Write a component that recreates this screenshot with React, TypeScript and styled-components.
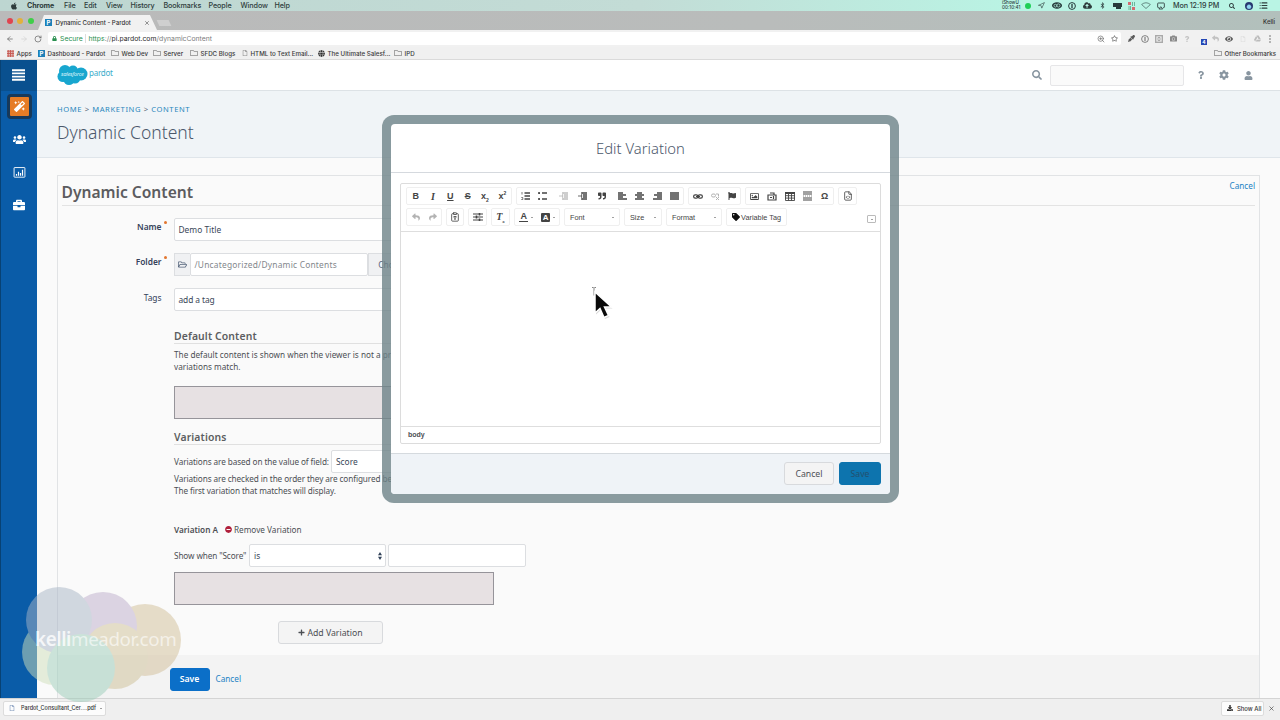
import React from 'react';
import styled, { createGlobalStyle } from 'styled-components';
import {
  FaMagic, FaUsers, FaBriefcase, FaRegFolderOpen, FaQuestion, FaCog, FaUser, FaSearch,
  FaApple, FaLock, FaPlus, FaMinusCircle, FaBluetoothB, FaCamera, FaEye, FaEyeDropper, FaCloudUploadAlt,
  FaRegFolder, FaQuoteRight,
  FaFlag, FaReply, FaShare, FaTag, FaRegImage,
  FaGlobe, FaRegFile, FaGoogleDrive, FaRegStar, FaDownload,
} from 'react-icons/fa';
import { Navigation, Airplay, List, ZoomIn, RotateCw, ArrowLeft, ArrowRight, X, ClipboardType, FileCode } from 'lucide-react';

const sans = '"Noto Sans", "Open Sans", sans-serif';
const ui = 'Inter, "Liberation Sans", sans-serif';

const Global = createGlobalStyle`
  * { box-sizing: border-box; }
  body { margin: 0; font-family: ${sans}; color: #4c4f54; overflow: hidden; }
  svg { display: block; flex: none; }
`;

const Screen = styled.div`
  position: relative;
  display: flex;
  flex-direction: column;
  width: 1280px;
  height: 720px;
  overflow: hidden;
  background: #fafafa;
`;

/* ---------- desktop menu bar and browser chrome ---------- */
const MenuBar = styled.div`
  display: flex;
  align-items: center;
  height: 11px;
  padding-left: 10px;
  background: linear-gradient(90deg, #bdd6d1, #c3dcd6 50%, #b9f4e4 80%);
  font: 500 7.2px/11px ${ui};
  color: #2e3c3c;
`;
const MenuItem = styled.span<{ $w: number; $bold?: boolean }>`
  width: ${p => p.$w}px;
  font-weight: ${p => (p.$bold ? 700 : 500)};
  letter-spacing: -0.1px;
  white-space: nowrap;
`;
const Spacer = styled.div`flex: 1;`;
const Slot = styled.span<{ $w: number; $c?: string }>`
  display: flex;
  align-items: center;
  justify-content: center;
  width: ${p => p.$w}px;
  color: ${p => p.$c || 'inherit'};
  flex: none;
`;
const Recorder = styled.span`
  width: 22px;
  font-size: 4.6px;
  line-height: 4.4px;
  white-space: pre;
`;
const Dot = styled.i<{ $c: string; $s?: number }>`
  width: ${p => p.$s || 6}px;
  height: ${p => p.$s || 6}px;
  border-radius: 50%;
  background: ${p => p.$c};
`;
const TabStrip = styled.div`
  display: flex;
  align-items: flex-end;
  height: 19px;
  padding: 0 5px 0 7px;
  background: linear-gradient(90deg, #bababa, #b9bcbb 60%, #b2c0bc);
  font: 500 6.1px ${ui};
  color: #333;
`;
const Lights = styled.div`
  display: flex;
  gap: 4.3px;
  width: 31px;
  padding-bottom: 6px;
`;
const Tab = styled.div`
  display: flex;
  align-items: center;
  width: 119px;
  height: 15px;
  padding: 0 7px 0 2px;
  background: #f1f1f1;
  clip-path: polygon(0 100%, 6px 0, 112px 0, 119px 100%);
  white-space: nowrap;
`;
const TabTitle = styled.span`flex: 1; padding-left: 3.5px;`;
const NewTab = styled.div`
  width: 12px;
  height: 6px;
  margin: 0 0 4px 1px;
  background: #cfcfcf;
  transform: skewX(25deg);
`;
const UserName = styled.span`padding-bottom: 5px; font-size: 6px;`;
const PLogo = styled.span`
  display: grid;
  place-items: center;
  width: 7px;
  height: 7px;
  margin-left: 5px;
  background: #1d80b8;
  color: #fff;
  font: 700 6px/7px ${ui};
`;
const AddressBar = styled.div`
  display: flex;
  align-items: center;
  height: 17px;
  background: #f1f1f1;
  color: #5c5c5c;
`;
const Omnibox = styled.div`
  display: flex;
  align-items: center;
  width: 1073px;
  height: 13px;
  padding: 0 3px 0 4px;
  background: #fff;
  border-radius: 2px;
  font: 400 6.85px ${ui};
  color: #7c7c7c;
`;
const Secure = styled.span`
  width: 26px;
  margin: 0 2.5px 0 3px;
  color: #2a9050;
  border-right: 1px solid #ddd;
`;
const Host = styled.span`color: #2b2b2b;`;
const Scheme = styled.span`color: #2a9050;`;
const Badge = styled.span`
  position: relative;
  &::after {
    content: '4';
    position: absolute;
    left: 0;
    top: 0;
    width: 6px;
    background: #2447b5;
    color: #fff;
    font: 700 5px/6px ${ui};
    text-align: center;
  }
`;
const Bookmarks = styled.div`
  display: flex;
  align-items: center;
  height: 13px;
  padding: 0 4px 0 7px;
  background: #f0f0f0;
  border-bottom: 1px solid #dadada;
  font: 500 6.2px ${ui};
  color: #3a3a3a;
`;
const Bookmark = styled.span<{ $w?: number }>`
  display: flex;
  align-items: center;
  gap: 2.5px;
  width: ${p => (p.$w ? p.$w + 'px' : 'auto')};
  white-space: nowrap;
  svg { color: #8b8b8b; }
  ${PLogo} { margin: 0; }
`;
const AppsGrid = styled.span`
  width: 7px;
  height: 7px;
  background:
    radial-gradient(circle, #c7574f 1px, transparent 1.2px) 0 0 / 2.4px 2.4px;
`;

/* ---------- application ---------- */
const Body = styled.div`display: flex; height: 638px;`;
const Sidebar = styled.nav`
  display: flex;
  flex-direction: column;
  align-items: center;
  width: 37px;
  padding-right: 1px;
  background: #0a5ca8;
  color: #fff;
  border-left: 1px solid #084274;
`;
const MenuToggle = styled.div`
  display: grid;
  place-items: center;
  width: 36px;
  height: 31px;
  padding: 0 0 2px;
  background: #09508f;
`;
const NavItem = styled.div<{ $active?: boolean }>`
  display: grid;
  place-items: center;
  width: 25px;
  height: 25px;
  margin: 2.5px 0 5.5px 1px;
  border-radius: 4px;
  border: 3px solid ${p => (p.$active ? '#17395a' : 'transparent')};
  background: ${p => (p.$active ? '#e67c26' : 'transparent')};
`;
const Main = styled.main`flex: 1; display: flex; flex-direction: column;`;
const Header = styled.header`
  display: flex;
  align-items: center;
  height: 31px;
  padding: 0 13px 0 20px;
  background: #fff;
  border-bottom: 1px solid #dde2e6;
  color: #8895a0;
`;
const Wordmark = styled.span`
  margin: -4px 0 0 1px;
  font-size: 8px;
  line-height: 10px;
  letter-spacing: -0.25px;
  color: #3aaccb;
`;
const SearchBox = styled.div`
  width: 134px;
  height: 21px;
  margin-left: 7px;
  background: #fafafa;
  border: 1px solid #e6e6e8;
  border-radius: 2px;
`;
const PageHead = styled.div`
  height: 67px;
  padding: 12px 20px 0;
  background: #f0f4f7;
  border-bottom: 1px solid #dfe5ea;
`;
const Crumbs = styled.div`
  height: 13px;
  font-size: 7.6px;
  line-height: 13px;
  letter-spacing: 0.6px;
  color: #2a87bd;
`;
const Sep = styled.span`color: #5a6a78;`;
const PageTitle = styled.h1`
  margin: 4px 0 0;
  font-size: 17.5px;
  line-height: 25px;
  font-weight: 300;
  color: #4b586b;
`;
const Panel = styled.section`
  width: 1203px;
  height: 523px;
  margin: 17px 0 0 20px;
  border: 1px solid #e1e3e5;
  border-bottom: 0;
`;
const PanelHead = styled.div`
  display: flex;
  justify-content: space-between;
  height: 30px;
  margin: 0 4px;
  border-bottom: 1px solid #e3e3e3;
`;
const PanelTitle = styled.h2`
  margin: 0 0 0 -0.5px;
  font-size: 15.6px;
  line-height: 32px;
  font-weight: 600;
  color: #5c5c5f;
`;
const LinkText = styled.span<{ $lh: number }>`
  font-size: 8.2px;
  line-height: ${p => p.$lh}px;
  color: #1c82c4;
`;
const Field = styled.div`display: flex; height: 23px; margin-top: 12px;`;
const Label = styled.label<{ $bold?: boolean }>`
  position: relative;
  width: 103.5px;
  margin-right: 12px;
  text-align: right;
  font-size: 8.4px;
  line-height: ${p => (p.$bold ? 18 : 20)}px;
  font-weight: ${p => (p.$bold ? 600 : 400)};
  color: #35425a;
`;
const Required = styled.i`
  position: absolute;
  right: -5px;
  top: 3px;
  width: 3px;
  height: 3px;
  border-radius: 50%;
  background: #e2762f;
`;
const Input = styled.div<{ $w: number; $ls?: number; $muted?: boolean }>`
  display: flex;
  align-items: center;
  justify-content: space-between;
  width: ${p => p.$w}px;
  height: 23px;
  padding: 0 3px 0 4px;
  background: #fff;
  border: 1px solid #dcdee1;
  border-radius: 2px;
  font-size: 8.4px;
  letter-spacing: ${p => p.$ls || 0}px;
  color: ${p => (p.$muted ? '#83878c' : '#3a4658')};
`;
const Addon = styled.div<{ $w: number }>`
  display: flex;
  align-items: center;
  justify-content: center;
  width: ${p => p.$w}px;
  height: 23px;
  background: #f0f1f3;
  border: 1px solid #dcdee1;
  border-width: 1px 0 1px 1px;
  font-size: 8.4px;
  color: #55657c;
`;
const Content = styled.div`margin-left: 116px;`;
const Subhead = styled.h3<{ $mt: number }>`
  width: 320px;
  height: 15px;
  margin: ${p => p.$mt}px 0 0;
  border-bottom: 1px solid #e0e0e0;
  font-size: 10.4px;
  line-height: 14px;
  letter-spacing: 0.12px;
  font-weight: 600;
  color: #5c5e61;
`;
const Para = styled.p<{ $mt?: number; $ls?: number }>`
  margin: ${p => p.$mt || 0}px 0 0;
  font-size: 8.2px;
  line-height: 12px;
  letter-spacing: ${p => p.$ls || 0}px;
  white-space: pre;
`;
const Preview = styled.div<{ $mt: number }>`
  width: 320px;
  height: 33px;
  margin-top: ${p => p.$mt}px;
  background: #e7e1e3;
  border: 1px solid #96949a;
`;
const Line = styled.div<{ $mt: number; $h: number }>`
  display: flex;
  align-items: center;
  height: ${p => p.$h}px;
  margin-top: ${p => p.$mt}px;
  font-size: 8.2px;
  white-space: nowrap;
`;
const Cell = styled.span<{ $w: number; $bold?: boolean; $ls?: number }>`
  width: ${p => p.$w}px;
  font-weight: ${p => (p.$bold ? 600 : 400)};
  letter-spacing: ${p => p.$ls || 0}px;
`;
const Gap = styled.span`width: 2px;`;
const Button = styled.button<{ $w: number; $kind?: 'blue' | 'dim' }>`
  display: flex;
  align-items: center;
  justify-content: center;
  gap: 2px;
  width: ${p => p.$w}px;
  height: 23px;
  padding: 0;
  border-radius: 3px;
  border: 1px solid ${p => (p.$kind === 'blue' ? '#0b6fc8' : p.$kind === 'dim' ? '#0d74ae' : '#d8dadd')};
  background: ${p => (p.$kind === 'blue' ? '#0b6fc8' : p.$kind === 'dim' ? '#0d74ae' : '#f4f4f4')};
  color: ${p => (p.$kind === 'blue' ? '#fff' : p.$kind === 'dim' ? '#22506f' : '#4c4f54')};
  font-family: ${sans};
  font-size: 8.7px;
  font-weight: ${p => (p.$kind === 'blue' ? 600 : 400)};
`;
const AddRow = styled.div`margin: 16px 0 0 104px;`;
const SaveBar = styled.div`
  display: flex;
  gap: 6px;
  height: 43px;
  margin-top: 11px;
  padding: 12.5px 0 0 111.5px;
  background: #f3f3f3;
`;
const Downloads = styled.footer`
  display: flex;
  align-items: center;
  height: 22px;
  padding: 0 2px 3px 3px;
  background: #efefef;
  border-top: 1px solid #d4d4d4;
  font: 500 5.9px ${ui};
  color: #333;
`;
const Chip = styled.div<{ $w: number }>`
  display: flex;
  align-items: center;
  gap: 4px;
  width: ${p => p.$w}px;
  height: 15px;
  padding: 0 5px;
  background: #fcfcfc;
  border: 1px solid #dcdcdc;
  border-radius: 2px;
  white-space: nowrap;
`;
const FileName = styled.span`
  width: 77px;
  margin-left: 2px;
  font-size: 5.5px;
`;

/* ---------- modal ---------- */
const Frame = styled.div`
  position: absolute;
  left: 382px;
  top: 115px;
  width: 517px;
  height: 388px;
  padding: 9px;
  border-radius: 12px;
  background: rgba(110, 131, 136, 0.8);
`;
const Dialog = styled.div`
  display: flex;
  flex-direction: column;
  height: 370px;
  border-radius: 4px;
  overflow: hidden;
  background: #fff;
`;
const DialogTitle = styled.div`
  height: 49px;
  border-bottom: 1px solid #d5d9de;
  text-align: center;
  font-size: 14.8px;
  line-height: 48px;
  font-weight: 300;
  color: #4b586b;
`;
const Editor = styled.div`
  display: flex;
  flex-direction: column;
  height: 261px;
  margin: 10px 9px 9px;
  border: 1px solid #dcdcdc;
  border-radius: 2px;
`;
const Tools = styled.div`
  display: flex;
  flex-direction: column;
  gap: 3px;
  height: 48px;
  padding: 3px 4px 0 5px;
  border-bottom: 1px solid #dedede;
`;
const ToolRow = styled.div`display: flex; gap: 4px; height: 18px; color: #444;`;
const Group = styled.div<{ $w: number; $menu?: boolean }>`
  display: flex;
  align-items: center;
  justify-content: ${p => (p.$menu ? 'space-between' : 'space-around')};
  width: ${p => p.$w}px;
  padding: 0 ${p => (p.$menu ? 5 : 0)}px;
  border: 1px solid #efefef;
  border-radius: 2px;
  font: 400 7.3px/9px "Liberation Sans", sans-serif;
  color: #444;
  white-space: nowrap;
`;
const Glyph = styled.span<{ $kind?: 'b' | 'i' | 'u' | 's' | 'a' | 'inv' }>`
  width: 9px;
  text-align: center;
  font: 700 9px/9px "Liberation Sans", sans-serif;
  ${p => p.$kind === 'i' && 'font-family: "Liberation Serif", serif; font-style: italic; font-size: 10px;'}
  ${p => p.$kind === 'u' && 'text-decoration: underline;'}
  ${p => p.$kind === 's' && 'text-decoration: line-through;'}
  ${p => p.$kind === 'a' && 'border-bottom: 1px solid #444;'}
  ${p => p.$kind === 'inv' && 'background: #444; color: #fff; border-radius: 1px; font-size: 8px;'}
  sub, sup { font-size: 5px; line-height: 0; }
`;
const Faint = styled.span`opacity: 0.4;`;
const Caret = styled.i`
  border: 1.9px solid transparent;
  border-top-color: #444;
  border-bottom: 0;
`;
const WithCaret = styled.span`display: flex; align-items: center; gap: 2.5px;`;
const Collapse = styled.span`
  display: grid;
  place-items: center;
  width: 9px;
  height: 8px;
  margin: 7px 0 0 auto;
  border: 1px solid #bbb;
  border-radius: 1px;
  ${Caret} { transform: rotate(180deg); }
`;
const Status = styled.div`
  height: 17px;
  margin-top: auto;
  padding-left: 7px;
  border-top: 1px solid #dedede;
  font: 700 7px/16px "Liberation Sans", sans-serif;
`;
const DialogFoot = styled.div`
  display: flex;
  justify-content: flex-end;
  gap: 5px;
  height: 41px;
  padding: 8px 9px 0 0;
  background: #eff3f7;
  border-top: 1px solid #d5dade;
`;
const Pointer = styled.svg`position: absolute; left: 590px; top: 284px;`;
const Watermark = styled.div`
  position: absolute;
  left: 20px;
  top: 585px;
  width: 164px;
  height: 120px;
`;
const WatermarkText = styled.div`
  position: absolute;
  left: 15px;
  top: 41px;
  font: 400 18.8px/26px ${sans};
  letter-spacing: -0.4px;
  color: rgba(255, 255, 255, 0.6);
  b { font-weight: 600; color: rgba(255, 255, 255, 0.8); }
`;

const Cloud = () => (
  <svg width="31" height="22" viewBox="0 0 31 22">
    <g fill="#18a6cf">
      <circle cx="8" cy="7" r="6" /><circle cx="16" cy="6.5" r="5" /><circle cx="24" cy="10" r="6.5" />
      <circle cx="6" cy="12.5" r="5.5" /><circle cx="12" cy="15.5" r="5.5" /><circle cx="18" cy="14" r="5.5" />
      <rect x="6" y="6" width="18" height="9" />
    </g>
    <text x="4" y="12" fontSize="5.8" fontStyle="italic" fill="#d8f2f9" fontFamily="Noto Sans" textLength="23">salesforce</text>
  </svg>
);

const Updown = () => (
  <svg width="4" height="8" viewBox="0 0 4 8" fill="#2f4057"><path d="M2 0l2 3.2H0zM2 8L0 4.8h4z" /></svg>
);

/* Stacked strokes; every entry is the [start, end] of one line. */
const Bars = ({ rows, children }: { rows: [number, number][]; children?: React.ReactNode }) => (
  <svg width="9" height="8" viewBox="0 0 9 8" stroke="#444" strokeWidth="1.3" fill="#444">
    {rows.map(([a, b], i) => <path key={i} d={`M${a} ${1 + i * (6 / (rows.length - 1))}H${b}`} />)}
    {children}
  </svg>
);

const folders: [string, number][] = [['Web Dev', 42], ['Server', 37], ['SFDC Blogs', 52]];

export default function App() {
  return (
    <Screen>
      <Global />
      <MenuBar>
        <MenuItem $w={17}><FaApple size={8} /></MenuItem>
        <MenuItem $w={37} $bold>Chrome</MenuItem>
        <MenuItem $w={20}>File</MenuItem>
        <MenuItem $w={22}>Edit</MenuItem>
        <MenuItem $w={24.5}>View</MenuItem>
        <MenuItem $w={33}>History</MenuItem>
        <MenuItem $w={45}>Bookmarks</MenuItem>
        <MenuItem $w={32}>People</MenuItem>
        <MenuItem $w={34}>Window</MenuItem>
        <MenuItem $w={20}>Help</MenuItem>
        <Spacer />
        <Recorder>{'iShowU\n00:10:41'}</Recorder>
        <Slot $w={7}><Dot $c="#20cf58" /></Slot>
        <Slot $w={21}><Navigation size={7} /></Slot>
        <Slot $w={10}><svg width="10" height="7" viewBox="0 0 10 7"><ellipse cx="5" cy="3.5" rx="5" ry="3.3" fill="#26393a" /><circle cx="3.4" cy="3.7" r="1.4" fill="none" stroke="#b9f4e4" strokeWidth=".7" /><circle cx="6.4" cy="3.5" r="1.6" fill="none" stroke="#b9f4e4" strokeWidth=".7" /></svg></Slot>
        <Slot $w={20}><svg width="8" height="8" viewBox="0 0 8 8" fill="none" stroke="#26393a"><circle cx="4" cy="4" r="3.4" /><path d="M4 2v4" strokeWidth="1.3" /></svg></Slot>
        <Slot $w={10}><FaCloudUploadAlt size={9} /></Slot>
        <Slot $w={20}><FaBluetoothB size={7} /></Slot>
        <Slot $w={10}><svg width="9" height="8" viewBox="0 0 9 8" fill="#26393a"><path d="M0 1h9v4H5v2H3V5H0zM5 5h3v2H5z" /></svg></Slot>
        <Slot $w={18}><svg width="7" height="8" viewBox="0 0 7 8"><path d="M0 0h3v3H0zM4 5h3v3H4z" fill="#d46a70" /><path d="M4.500 0v4M1 4v4M2.500 4v4M6.500 0v4" stroke="#58a487" strokeWidth=".8" /></svg></Slot>
        <Slot $w={11}><svg width="10" height="7" viewBox="0 0 10 7" fill="none" stroke="#52706c" strokeWidth=".8"><path d="M.6 2.500Q5-1 9.400 2.500L5 6.500z" /></svg></Slot>
        <Slot $w={20}><Airplay size={8} strokeWidth={2.6} /></Slot>
        <Slot $w={2} />
        <MenuItem $w={54}>Mon 12:19 PM</MenuItem>
        <Slot $w={10}><FaSearch size={6} /></Slot>
        <Slot $w={23}><Dot $c="radial-gradient(circle at 50% 60%, #8fd4f0 25%, #27376f 45%)" $s={8} /></Slot>
        <Slot $w={7}><List size={9} strokeWidth={3} /></Slot>
        <Slot $w={13} />
      </MenuBar>

      <TabStrip>
        <Lights><Dot $c="#e0444f" /><Dot $c="#e2b13c" /><Dot $c="#3fce49" /></Lights>
        <Tab><PLogo>P</PLogo><TabTitle>Dynamic Content - Pardot</TabTitle><Slot $w={6}><X size={6} /></Slot></Tab>
        <NewTab />
        <Spacer />
        <UserName>Kelli</UserName>
      </TabStrip>

      <AddressBar>
        <Slot $w={20}><ArrowLeft size={8} /></Slot>
        <Slot $w={7} $c="#d0d0d0"><ArrowRight size={8} /></Slot>
        <Slot $w={21}><RotateCw size={8} /></Slot>
        <Omnibox>
          <FaLock size={5} color="#2a9050" />
          <Secure>Secure</Secure>
          <span><Scheme>https</Scheme>://<Host>pi.pardot.com</Host>/dynamicContent</span>
          <Spacer />
          <ZoomIn size={8} color="#666" />
          <Slot $w={6} />
          <FaRegStar size={7} color="#666" />
        </Omnibox>
        <Slot $w={21}><FaEyeDropper size={7} /></Slot>
        <Slot $w={6}><svg width="8" height="8" viewBox="0 0 8 8" fill="none" stroke="#666"><circle cx="4" cy="4" r="3.4" strokeWidth=".8" /><path d="M4 2v4" /></svg></Slot>
        <Slot $w={22}><svg width="8" height="8" viewBox="0 0 8 8" fill="none" stroke="#aaa" strokeWidth="1.4"><rect x=".7" y=".7" width="6.600" height="6.600" /><path d="M3 2.500h2v3H3z" strokeWidth="1" /></svg></Slot>
        <Slot $w={6}><FaCamera size={7} color="#888" /></Slot>
        <Slot $w={22} $c="#c2c2c2"><FaQuestion size={6} /></Slot>
        <Slot $w={6}><Badge /></Slot>
        <Slot $w={22} $c="#c2c2c2"><FaReply size={7} /></Slot>
        <Slot $w={6}><FaEye size={8} /></Slot>
        <Slot $w={22} $c="#ddd"><FaRegFile size={6} /></Slot>
        <Slot $w={6} $c="#bbb"><FaGoogleDrive size={7} /></Slot>
        <Slot $w={20}><svg width="2" height="8" viewBox="0 0 2 8" fill="#666"><circle cx="1" cy="1" r=".8" /><circle cx="1" cy="4" r=".8" /><circle cx="1" cy="7" r=".8" /></svg></Slot>
      </AddressBar>

      <Bookmarks>
        <Bookmark $w={31}><AppsGrid />Apps</Bookmark>
        <Bookmark $w={73}><PLogo>P</PLogo>Dashboard - Pardot</Bookmark>
        {folders.map(([name, w]) => (
          <Bookmark key={name} $w={w}><FaRegFolder size={8} />{name}</Bookmark>
        ))}
        <Bookmark $w={76}><FaRegFile size={6} />HTML to Text Email...</Bookmark>
        <Bookmark $w={76}><FaGlobe size={7} color="#333" />The Ultimate Salesf...</Bookmark>
        <Bookmark><FaRegFolder size={8} />IPD</Bookmark>
        <Spacer />
        <Bookmark><FaRegFolder size={8} />Other Bookmarks</Bookmark>
      </Bookmarks>

      <Body>
        <Sidebar>
          <MenuToggle>
            <svg width="13" height="12" viewBox="0 0 13 12" stroke="#fff" strokeWidth="1.900"><path d="M0 1.200h13M0 4.400h13M0 7.600h13M0 10.800h13" /></svg>
          </MenuToggle>
          <NavItem $active><FaMagic size={11} /></NavItem>
          <NavItem><FaUsers size={13} /></NavItem>
          <NavItem>
            <svg width="13" height="11" viewBox="0 0 13 12" fill="none" stroke="#fff"><rect x=".6" y=".6" width="11.800" height="10.500" rx=".5" /><path d="M3.200 9.500v-2M5.400 9.500V5.200M7.600 9.500V6.500M9.800 9.500V3" strokeWidth="1.300" /></svg>
          </NavItem>
          <NavItem><FaBriefcase size={12} /></NavItem>
        </Sidebar>
        <Main>
          <Header>
            <Cloud />
            <Wordmark>pardot</Wordmark>
            <Spacer />
            <FaSearch size={10} />
            <Slot $w={1} />
            <SearchBox />
            <Slot $w={34}><FaQuestion size={8} /></Slot>
            <Slot $w={12}><FaCog size={10} /></Slot>
            <Slot $w={37}><FaUser size={9} /></Slot>
          </Header>
          <PageHead>
            <Crumbs>HOME <Sep>&gt;</Sep> MARKETING <Sep>&gt;</Sep> CONTENT</Crumbs>
            <PageTitle>Dynamic Content</PageTitle>
          </PageHead>
          <Panel>
            <PanelHead>
              <PanelTitle>Dynamic Content</PanelTitle>
              <LinkText $lh={19}>Cancel</LinkText>
            </PanelHead>
            <Field>
              <Label $bold>Name<Required /></Label>
              <Input $w={320}>Demo Title</Input>
            </Field>
            <Field>
              <Label $bold>Folder<Required /></Label>
              <Addon $w={16}><FaRegFolderOpen size={9} /></Addon>
              <Input $w={178} $muted $ls={0.22}>/Uncategorized/Dynamic Contents</Input>
              <Addon $w={36}>Cho</Addon>
            </Field>
            <Field>
              <Label>Tags</Label>
              <Input $w={320} $ls={-0.1}>add a tag</Input>
            </Field>
            <Content>
              <Subhead $mt={18}>Default Content</Subhead>
              <Para $mt={5} $ls={0.01}>{'The default content is shown when the viewer is not a pro\nvariations match.'}</Para>
              <Preview $mt={13} />
              <Subhead $mt={11}>Variations</Subhead>
              <Line $mt={5} $h={23}>
                <Cell $w={157} $ls={-0.09}>Variations are based on the value of field:</Cell>
                <Input $w={163}>Score</Input>
              </Line>
              <Para $ls={-0.09}>{'Variations are checked in the order they are configured be\nThe first variation that matches will display.'}</Para>
              <Line $mt={25.5} $h={14}>
                <Cell $w={51} $bold>Variation A</Cell>
                <Cell $w={9}><FaMinusCircle size={7} color="#b0203c" /></Cell>
                Remove Variation
              </Line>
              <Line $mt={7.5} $h={23}>
                <Cell $w={75} $ls={-0.1}>Show when "Score"</Cell>
                <Input $w={137}>is<Updown /></Input>
                <Gap />
                <Input $w={138} />
              </Line>
              <Preview $mt={5} />
              <AddRow><Button $w={105}><FaPlus size={7} />Add Variation</Button></AddRow>
            </Content>
            <SaveBar>
              <Button $w={40} $kind="blue">Save</Button>
              <LinkText $lh={21}>Cancel</LinkText>
            </SaveBar>
          </Panel>
        </Main>
      </Body>

      <Downloads>
        <Chip $w={103}><FaRegFile size={6} color="#7b93b8" /><FileName>Pardot_Consultant_Cer....pdf</FileName><Caret /></Chip>
        <Spacer />
        <Chip $w={43}><FaDownload size={6} />Show All</Chip>
        <Slot $w={14}><X size={7} /></Slot>
      </Downloads>

      <Watermark>
        <svg width="164" height="120" viewBox="20 585 164 120" opacity=".5">
          <circle cx="55" cy="652" r="33" fill="#cfe0bb" />
          <circle cx="145" cy="640" r="36" fill="#d2bf98" />
          <circle cx="103" cy="626" r="34" fill="#bdaecb" />
          <circle cx="115" cy="656" r="33" fill="#cfc197" />
          <circle cx="59" cy="620" r="33" fill="#a8b5c6" />
          <circle cx="81" cy="668" r="34" fill="#9dceba" />
        </svg>
        <WatermarkText><b>kelli</b>meador.com</WatermarkText>
      </Watermark>

      <Frame>
        <Dialog>
          <DialogTitle>Edit Variation</DialogTitle>
          <Editor>
            <Tools>
              <ToolRow>
                <Group $w={106}>
                  <Glyph>B</Glyph><Glyph $kind="i">I</Glyph><Glyph $kind="u">U</Glyph><Glyph $kind="s">S</Glyph>
                  <Glyph>x<sub>2</sub></Glyph><Glyph>x<sup>2</sup></Glyph>
                </Group>
                <Group $w={168}>
                  <Slot $w={16}><Bars rows={[[3.5, 9], [3.5, 9], [3.5, 9]]}><path d="M1 0v2.500M.3 5.500h1.500v2H.3" strokeWidth=".7" fill="none" /></Bars></Slot>
                  <Slot $w={19}><Bars rows={[[4, 9], [4, 9]]}><circle cx="1.3" cy="1.2" r=".8" stroke="none" /><circle cx="1.3" cy="7" r=".8" stroke="none" /><path d="M0 1h2M0 7h2" /></Bars></Slot>
                  <Slot $w={22}><Faint><Bars rows={[[4, 9], [5, 9], [5, 9], [4, 9]]}><path d="M0 4h4M3.700 0v8" strokeWidth=".8" /></Bars></Faint></Slot>
                  <Slot $w={16}><Bars rows={[[4, 9], [5, 9], [5, 9], [4, 9]]}><path d="M0 4h4M3.700 0v8" strokeWidth=".8" /></Bars></Slot>
                  <Slot $w={23}><FaQuoteRight size={8} /></Slot>
                  <Slot $w={17}><Bars rows={[[0, 5], [0, 8], [0, 5], [0, 9]]} /></Slot>
                  <Slot $w={18}><Bars rows={[[2, 7], [0, 9], [2, 7], [0, 9]]} /></Slot>
                  <Slot $w={18}><Bars rows={[[4, 9], [1, 9], [4, 9], [0, 9]]} /></Slot>
                  <Slot $w={16}><Bars rows={[[0, 9], [0, 9], [0, 9], [0, 9]]} /></Slot>
                </Group>
                <Group $w={53}>
                  <svg width="10" height="5" viewBox="0 0 10 5" fill="none" stroke="#444" strokeWidth="1.200"><rect x=".6" y=".8" width="4.300" height="3.400" rx="1.600" /><rect x="5.100" y=".8" width="4.300" height="3.400" rx="1.600" /><path d="M3 2.500h4" /></svg>
                  <Faint><svg width="9" height="7" viewBox="0 0 9 7" fill="none" stroke="#444"><rect x=".5" y="1" width="4" height="3" rx="1.500" /><path d="M5 1h2.500v2.500M5 4l3 3M8 4L5 7" /></svg></Faint>
                  <FaFlag size={8} />
                </Group>
                <Group $w={89}>
                  <FaRegImage size={9} />
                  <svg width="10" height="9" viewBox="0 0 10 9" fill="none" stroke="#444" strokeWidth="1.200"><path d="M1 3h8v5H1zM3 1h4v2M3 5.500h2M6.500 4v3" /></svg>
                  <svg width="10" height="9" viewBox="0 0 10 9" fill="none" stroke="#444" strokeWidth=".9"><path d="M0 1h10" strokeWidth="1.800" /><path d="M.5 1v7.500h9V1M3.500 1v7.500M6.500 1v7.500M0 3.700h10M0 6.100h10" /></svg>
                  <svg width="9" height="10" viewBox="0 0 9 10" stroke="#444"><path d="M0 1h9M0 3h9M0 7h9M0 9h9" strokeWidth="1.200" /><path d="M0 5h9" strokeWidth=".6" strokeDasharray="1 1" /></svg>
                  <Glyph>Ω</Glyph>
                </Group>
                <Group $w={19}><FileCode size={10} /></Group>
              </ToolRow>
              <ToolRow>
                <Group $w={36}><Faint><FaReply size={8} /></Faint><Faint><FaShare size={8} /></Faint></Group>
                <Group $w={18}><ClipboardType size={10} /></Group>
                <Group $w={19}>
                  <svg width="10" height="8" viewBox="0 0 10 8" stroke="#444" strokeWidth="1.200"><path d="M0 1h10M0 4h10M0 7h10" /><path d="M6.500-.5v3M3.500 2.500v3M6.500 5.500v3" strokeWidth="1.600" /></svg>
                </Group>
                <Group $w={19}><Glyph $kind="i">T<sub>x</sub></Glyph></Group>
                <Group $w={46}>
                  <WithCaret><Glyph $kind="a">A</Glyph><Caret /></WithCaret>
                  <WithCaret><Glyph $kind="inv">A</Glyph><Caret /></WithCaret>
                </Group>
                <Group $w={56} $menu>Font<Caret /></Group>
                <Group $w={38} $menu>Size<Caret /></Group>
                <Group $w={56} $menu>Format<Caret /></Group>
                <Group $w={61} $menu><FaTag size={8} color="#111" />Variable Tag</Group>
                <Collapse><Caret /></Collapse>
              </ToolRow>
            </Tools>
            <Status>body</Status>
          </Editor>
          <DialogFoot>
            <Button $w={50}>Cancel</Button>
            <Button $w={42} $kind="dim">Save</Button>
          </DialogFoot>
        </Dialog>
      </Frame>

      <Pointer width="26" height="40" viewBox="0 0 26 40">
        <path d="M2 3.500h1.500M4.500 3.500H6M4 3.500v8" stroke="#777" strokeWidth=".9" fill="none" />
        <path d="M5 8v21l5-4.500 4 9 4.500-2-4-8.500h7z" fill="#999" opacity=".35" transform="translate(1 1.500)" />
        <path d="M5 8v21l5-4.500 4 9 4.500-2-4-8.500h7z" fill="#0a0a0a" stroke="#fff" strokeWidth="1.500" />
      </Pointer>
    </Screen>
  );
}
